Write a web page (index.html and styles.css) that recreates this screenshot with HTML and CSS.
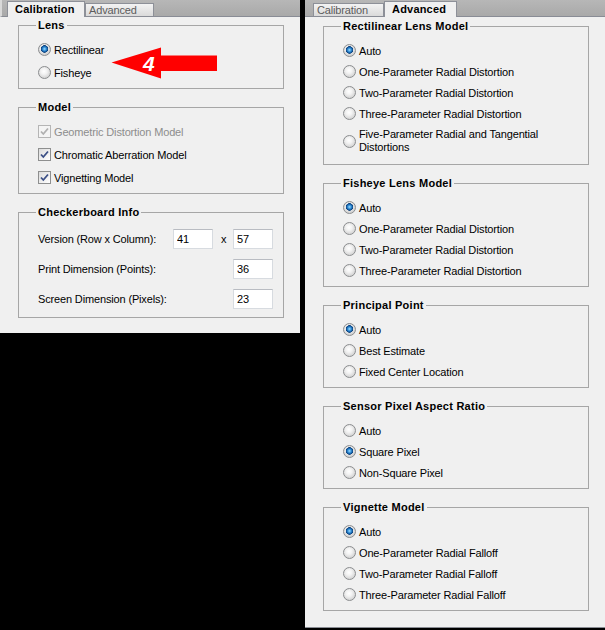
FILE: index.html
```html
<!DOCTYPE html>
<html>
<head>
<meta charset="utf-8">
<link rel="stylesheet" href="styles.css">
</head>
<body>
<div class="screen">
  <div class="panel left">
    <div class="tabs">
      <span class="tab active w-cal">Calibration</span>
      <span class="tab w-adv">Advanced</span>
    </div>
    <div class="page">
      <fieldset class="group">
        <legend>Lens</legend>
        <div class="row tall"><span class="radio on"></span><span>Rectilinear</span></div>
        <div class="row tall"><span class="radio"></span><span>Fisheye</span></div>
      </fieldset>
      <fieldset class="group">
        <legend>Model</legend>
        <div class="row tall disabled"><span class="check dis"><svg viewBox="0 0 11 11" width="11" height="11"><path d="M2 5.5 L4.3 8 L9 2.5" /></svg></span><span>Geometric Distortion Model</span></div>
        <div class="row tall"><span class="check"><svg viewBox="0 0 11 11" width="11" height="11"><path d="M2 5.5 L4.3 8 L9 2.5" /></svg></span><span>Chromatic Aberration Model</span></div>
        <div class="row tall"><span class="check"><svg viewBox="0 0 11 11" width="11" height="11"><path d="M2 5.5 L4.3 8 L9 2.5" /></svg></span><span>Vignetting Model</span></div>
      </fieldset>
      <fieldset class="group checker">
        <legend>Checkerboard Info</legend>
        <div class="grid">
          <span class="lbl">Version (Row x Column):</span>
          <input class="field" type="text" value="41">
          <span class="times">x</span>
          <input class="field" type="text" value="57">
          <span class="lbl">Print Dimension (Points):</span>
          <input class="field c4" type="text" value="36">
          <span class="lbl">Screen Dimension (Pixels):</span>
          <input class="field c4" type="text" value="23">
        </div>
      </fieldset>
    </div>
    <svg class="arrow" width="107" height="33" viewBox="0 0 107 33">
      <polygon points="0.5,15.5 50,0.5 50,8.5 106,8.5 106,24 50,24 50,31.5" fill="#ff0000"/>
      <text x="32" y="24" font-family="Liberation Sans, Arial, sans-serif" font-weight="bold" font-style="italic" font-size="21" fill="#ffffff">4</text>
    </svg>
  </div>

  <div class="panel right">
    <div class="tabs rtabs">
      <span class="tab w-cal2">Calibration</span>
      <span class="tab active w-adv2">Advanced</span>
    </div>
    <div class="page rpage">
      <fieldset class="group r">
        <legend>Rectilinear Lens Model</legend>
        <div class="row"><span class="radio on"></span><span>Auto</span></div>
        <div class="row"><span class="radio"></span><span>One-Parameter Radial Distortion</span></div>
        <div class="row"><span class="radio"></span><span>Two-Parameter Radial Distortion</span></div>
        <div class="row"><span class="radio"></span><span>Three-Parameter Radial Distortion</span></div>
        <div class="row multi"><span class="radio"></span><span class="wrap">Five-Parameter Radial and Tangential Distortions</span></div>
      </fieldset>
      <fieldset class="group r">
        <legend>Fisheye Lens Model</legend>
        <div class="row"><span class="radio on"></span><span>Auto</span></div>
        <div class="row"><span class="radio"></span><span>One-Parameter Radial Distortion</span></div>
        <div class="row"><span class="radio"></span><span>Two-Parameter Radial Distortion</span></div>
        <div class="row"><span class="radio"></span><span>Three-Parameter Radial Distortion</span></div>
      </fieldset>
      <fieldset class="group r">
        <legend>Principal Point</legend>
        <div class="row"><span class="radio on"></span><span>Auto</span></div>
        <div class="row"><span class="radio"></span><span>Best Estimate</span></div>
        <div class="row"><span class="radio"></span><span>Fixed Center Location</span></div>
      </fieldset>
      <fieldset class="group r">
        <legend>Sensor Pixel Aspect Ratio</legend>
        <div class="row"><span class="radio"></span><span>Auto</span></div>
        <div class="row"><span class="radio on"></span><span>Square Pixel</span></div>
        <div class="row"><span class="radio"></span><span>Non-Square Pixel</span></div>
      </fieldset>
      <fieldset class="group r">
        <legend>Vignette Model</legend>
        <div class="row"><span class="radio on"></span><span>Auto</span></div>
        <div class="row"><span class="radio"></span><span>One-Parameter Radial Falloff</span></div>
        <div class="row"><span class="radio"></span><span>Two-Parameter Radial Falloff</span></div>
        <div class="row"><span class="radio"></span><span>Three-Parameter Radial Falloff</span></div>
      </fieldset>
    </div>
  </div>
</div>
</body>
</html>
```

FILE: styles.css
```css
html, body {
  margin: 0;
  padding: 0;
  background: #000;
}
body {
  font-family: "Liberation Sans", Arial, sans-serif;
  font-size: 11px;
  letter-spacing: -0.15px;
  color: #000;
}
.screen {
  display: flex;
  align-items: flex-start;
  gap: 5px;
  width: 605px;
  height: 630px;
  overflow: hidden;
}
.panel {
  position: relative;
  width: 300px;
  background: #f0f0f0;
  flex: none;
}
.panel.left {
  height: 333px;
}
.panel.right {
  height: 627px;
  border-bottom: 1px solid #8a8d94;
}

/* tabs */
.tabs {
  display: flex;
  align-items: flex-end;
  height: 16px;
  padding-left: 5px;
  background: linear-gradient(#b7b7b7, #a9a9a9);
  border-bottom: 1px solid #898c95;
  border-left: 2px solid #d9d9d9;
}
.rtabs {
  padding-left: 8px;
  border-left: none;
}
.tab {
  box-sizing: border-box;
  height: 13px;
  line-height: 12px;
  padding-left: 3px;
  border: 1px solid #8d9098;
  border-bottom: none;
  background: linear-gradient(#f3f3f3, #dadada);
  color: #5c5c5c;
  white-space: nowrap;
}
.tab.active {
  height: 16px;
  line-height: 14px;
  margin-bottom: -1px;
  padding-left: 7px;
  background: #f0f0f0;
  color: #000;
  font-weight: bold;
  letter-spacing: 0.2px;
}
.w-cal { width: 78px; }
.w-adv { width: 69px; }
.w-cal2 { width: 71px; }
.w-adv2 { width: 73px; }

/* page */
.page {
  display: flex;
  flex-direction: column;
  gap: 12px;
  padding: 2px 16px 15px 16px;
}
.rpage {
  padding: 3px 16px 0 18px;
}
.left .page {
  padding-left: 18px;
}

.group {
  margin: 0;
  border: 1px solid #a6a6a6;
  padding: 6px 8px 4px 19px;
  min-width: 0;
}
.group legend {
  padding: 0 2px;
  margin-left: -2px;
  height: 13px;
  line-height: 13px;
  font-weight: bold;
  letter-spacing: 0.25px;
}
.group.r {
  padding: 7px 8px 5px 19px;
}
.group.r:first-child {
  padding-bottom: 6px;
}
.checker {
  padding-top: 5px;
  padding-bottom: 3px;
}

.row {
  display: flex;
  align-items: center;
  height: 21px;
  gap: 3px;
}
.row.tall {
  height: 23px;
}
.row.multi {
  height: auto;
  padding: 4px 0;
  line-height: 13px;
}
.wrap {
  max-width: 200px;
}
.disabled {
  color: #8d8d8d;
}

/* radio */
.radio {
  box-sizing: border-box;
  flex: none;
  width: 13px;
  height: 13px;
  border-radius: 50%;
  border: 1px solid #8b8d8f;
  background: radial-gradient(circle at 45% 40%, #ffffff 0, #f2f2f2 3px, #d9d9d9 6px);
}
.radio.on {
  background:
    radial-gradient(circle at 50% 45%, #a8dcfc 0, #45a2e4 1.4px, #1764ad 2.7px, #0d3f78 3.5px, rgba(13,63,120,0) 4px),
    radial-gradient(circle at 45% 40%, #ffffff 0, #f0f0f0 3px, #d4d4d4 6px);
}

/* checkbox */
.check {
  box-sizing: border-box;
  flex: none;
  width: 13px;
  height: 13px;
  border: 1px solid #8e8f8f;
  background: linear-gradient(135deg, #dcdcdc, #ffffff);
  display: flex;
  align-items: center;
  justify-content: center;
}
.check svg {
  display: block;
}
.check path {
  fill: none;
  stroke: #3b4f86;
  stroke-width: 1.8;
}
.check.dis {
  border-color: #b5b5b5;
  background: #f4f4f4;
}
.check.dis path {
  stroke: #b0b0b0;
}

/* checkerboard grid */
.grid {
  display: grid;
  grid-template-columns: 135px 40px 20px 40px;
  grid-auto-rows: 30px;
  align-items: center;
}
.lbl {
  grid-column: 1;
}
.times {
  padding-left: 8px;
}
.c4 {
  grid-column: 4;
}
.field {
  box-sizing: border-box;
  width: 40px;
  height: 20px;
  margin: 0;
  padding: 0 3px;
  border: 1px solid #d7dbe0;
  border-top-color: #b9bcc2;
  background: #fff;
  font-family: "Liberation Sans", Arial, sans-serif;
  font-size: 11px;
  color: #000;
  outline: none;
}

/* annotation arrow */
.arrow {
  position: absolute;
  left: 111px;
  top: 47px;
}
```
